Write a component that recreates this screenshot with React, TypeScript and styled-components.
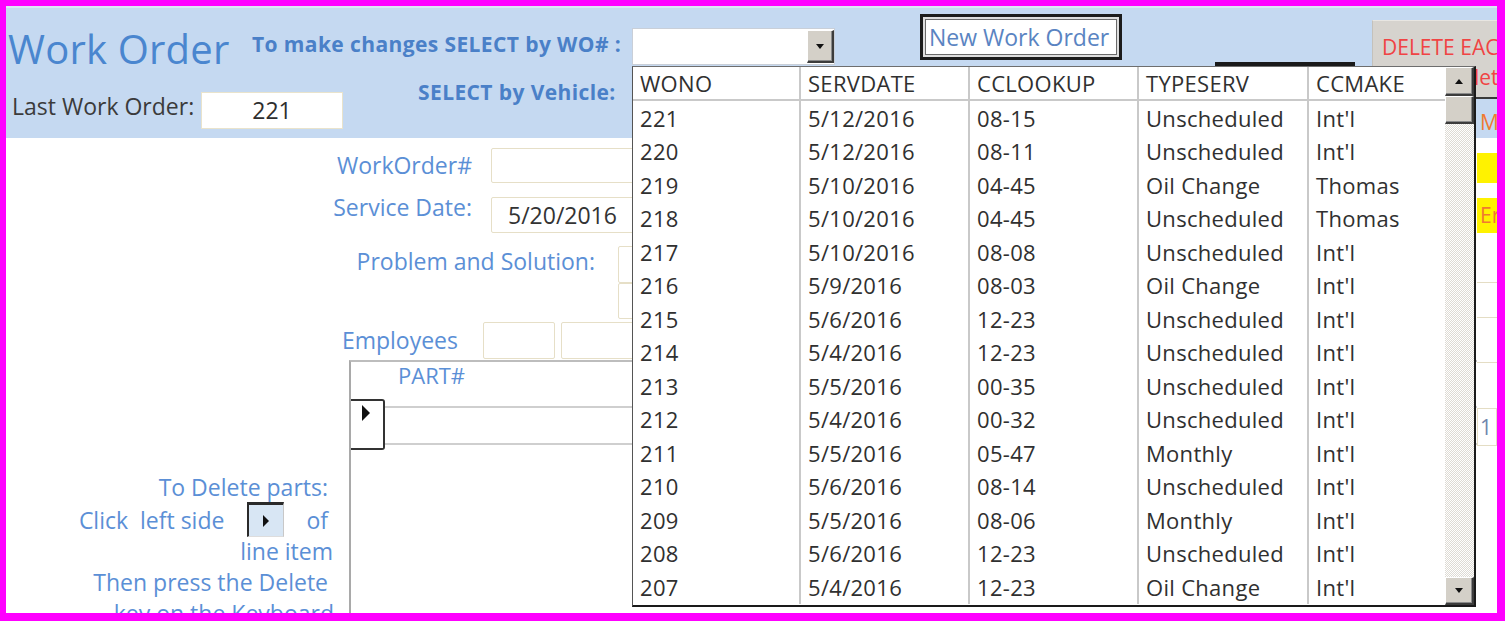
import React from "react";
import styled, { createGlobalStyle } from "styled-components";

const FONT = `"Open Sans", "Liberation Sans", sans-serif`;

const GlobalStyle = createGlobalStyle`
  html, body { margin: 0; padding: 0; background: #ffffff; }
  #root { width: 1505px; height: 621px; }
`;

const Frame = styled.div`
  position: relative;
  box-sizing: border-box;
  width: 1505px;
  height: 621px;
  border-style: solid;
  border-color: #ff00ff;
  border-width: 6px 8px 8px 6px;
  background: #ffffff;
  overflow: hidden;
  font-family: ${FONT};
  display: flex;
  flex-direction: column;
`;

/* ---------- form header ---------- */

const Header = styled.header`
  flex: none;
  height: 132px;
  background: linear-gradient(#dce7f5 0 2px, #c5d9f1 2px);
  display: flex;
  flex-direction: column;
`;

const HeaderRow = styled.div<{ $h: number }>`
  flex: none;
  height: ${(p) => p.$h}px;
  display: flex;
  align-items: flex-start;
`;

const Title = styled.h1`
  margin: 23px 0 0 2px;
  width: 244px;
  flex: none;
  font-size: 40px;
  line-height: 1;
  font-weight: 400;
  letter-spacing: 0.2px;
  color: #4a86cf;
  white-space: nowrap;
`;

const Prompt = styled.div<{ $w: number; $top: number; $left?: number }>`
  flex: none;
  width: ${(p) => p.$w}px;
  margin: ${(p) => p.$top}px 0 0 ${(p) => p.$left ?? 0}px;
  font-size: 21px;
  line-height: 1;
  font-weight: 700;
  letter-spacing: 0.4px;
  color: #4a80c8;
  white-space: nowrap;
`;

const ComboBox = styled.div`
  flex: none;
  margin: 22px 0 0 12px;
  width: 203px;
  height: 37px;
  box-sizing: border-box;
  background: #ffffff;
  border: 1px solid #c9cfd8;
  display: flex;
  justify-content: flex-end;
  padding: 1px 0 1px 0;
`;

const Raised = styled.div`
  box-sizing: border-box;
  background: #d4d0c8;
  border-style: solid;
  border-width: 1px 2px 2px 1px;
  border-color: #ffffff #3c3c3c #3c3c3c #ffffff;
  box-shadow: inset -1px -1px 0 #8a8a8a;
  display: flex;
  align-items: center;
  justify-content: center;
`;

const ComboButton = styled(Raised)`
  width: 27px;
  height: 33px;
`;

const Arrow = styled.span<{ $up?: boolean }>`
  width: 0;
  height: 0;
  border-left: 4px solid transparent;
  border-right: 4px solid transparent;
  ${(p) =>
    p.$up ? "border-bottom: 5px solid #111111;" : "border-top: 5px solid #111111;"}
`;

const NewOrderButton = styled.div`
  flex: none;
  margin: 8px 0 0 85px;
  width: 202px;
  height: 46px;
  box-sizing: border-box;
  border: 3px solid #1c1c1c;
  box-shadow: inset 0 0 0 2px #dedede, inset 0 0 0 3px #6a6a6a;
  background: #ffffff;
  padding-left: 6px;
  font-size: 23px;
  line-height: 40px;
  color: #5a84c2;
  white-space: nowrap;
`;

const ButtonBehind = styled.div`
  flex: none;
  margin: 56px 0 0 93px;
  width: 140px;
  height: 40px;
  box-sizing: border-box;
  border-top: 5px solid #1a1a1a;
  background: #d4d0c8;
`;

const DeleteButton = styled.div`
  flex: none;
  margin: 14px 0 0 17px;
  width: 150px;
  height: 79px;
  box-sizing: border-box;
  background: #d6d3ce;
  border-top: 1px solid #e8e6e2;
  border-left: 1px solid #c4c1bb;
  border-bottom: 2px solid #3a3a3a;
  padding: 11px 0 0 9px;
  color: #f04444;
  font-size: 21px;
  line-height: 30px;
  white-space: nowrap;
`;

const DeleteLine = styled.div<{ $indent?: number }>`
  padding-left: ${(p) => p.$indent ?? 0}px;
`;

const LastLabel = styled.div`
  flex: none;
  margin: 19px 0 0 6px;
  width: 189px;
  font-size: 23px;
  line-height: 1;
  color: #3b3b3b;
  white-space: nowrap;
`;

const ValueBox = styled.div`
  flex: none;
  margin-top: 16px;
  width: 142px;
  height: 37px;
  box-sizing: border-box;
  background: #ffffff;
  border: 1px solid #e9e3cc;
  text-align: center;
  font-size: 23px;
  line-height: 35px;
  color: #2e2e2e;
`;

const SideNote = styled.div<{ $left: number; $top: number }>`
  flex: none;
  margin: ${(p) => p.$top}px 0 0 ${(p) => p.$left}px;
  font-size: 21px;
  line-height: 1;
  color: #f07a30;
  white-space: nowrap;
`;

/* ---------- form detail ---------- */

const Body = styled.main`
  flex: 1;
  display: flex;
  min-height: 0;
`;

const MainColumn = styled.div`
  flex: 1;
  display: flex;
  flex-direction: column;
  min-width: 0;
`;

const FieldRow = styled.div<{ $top: number; $h: number; $center?: boolean }>`
  flex: none;
  display: flex;
  align-items: ${(p) => (p.$center ? "center" : "flex-start")};
  margin-top: ${(p) => p.$top}px;
  height: ${(p) => p.$h}px;
`;

const FieldLabel = styled.div<{ $w: number; $top?: number }>`
  flex: none;
  width: ${(p) => p.$w}px;
  margin-top: ${(p) => p.$top ?? 0}px;
  text-align: right;
  font-size: 23px;
  line-height: 1;
  color: #5b8fd6;
  white-space: nowrap;
`;

const TextBox = styled.div<{ $left: number; $w: number; $h: number }>`
  flex: none;
  margin-left: ${(p) => p.$left}px;
  width: ${(p) => p.$w}px;
  height: ${(p) => p.$h}px;
  box-sizing: border-box;
  border: 1px solid #e6dfc7;
  border-radius: 2px;
  background: #ffffff;
  padding-left: 16px;
  font-size: 23px;
  line-height: ${(p) => p.$h - 2}px;
  color: #333333;
  white-space: nowrap;
`;

const BoxStack = styled.div`
  flex: none;
  margin-left: 23px;
  display: flex;
  flex-direction: column;
`;

const BottomArea = styled.div`
  flex: 1;
  display: flex;
  margin-top: 1px;
  min-height: 0;
`;

const HelpColumn = styled.div`
  flex: none;
  width: 343px;
  box-sizing: border-box;
  padding: 112px 21px 0 0;
  display: flex;
  flex-direction: column;
  align-items: flex-end;
  color: #5b8fd6;
  font-size: 23px;
`;

const HelpLine = styled.div<{ $shift?: number }>`
  height: 31px;
  line-height: 31px;
  white-space: nowrap;
  margin-right: ${(p) => -(p.$shift ?? 0)}px;
`;

const HelpInline = styled.div`
  height: 33px;
  display: flex;
  align-items: center;
  white-space: nowrap;
`;

const SelectorChip = styled.span`
  display: inline-flex;
  align-items: center;
  justify-content: center;
  width: 37px;
  height: 35px;
  box-sizing: border-box;
  margin: 0 22px 0 23px;
  background: #d8e6f4;
  border-top: 3px solid #2a2a2a;
  border-left: 2px solid #2a2a2a;
  border-right: 1px solid #c8c8c8;
  border-bottom: 1px solid #dddddd;
`;

const PlayArrow = styled.span<{ $size?: number }>`
  width: 0;
  height: 0;
  border-top: ${(p) => p.$size ?? 7}px solid transparent;
  border-bottom: ${(p) => p.$size ?? 7}px solid transparent;
  border-left: ${(p) => (p.$size ?? 7) * 1.1}px solid #111111;
`;

const Subform = styled.div`
  flex: 1;
  display: flex;
  flex-direction: column;
  border-left: 2px solid #a9a9a9;
  border-top: 2px solid #bdbdbd;
  min-width: 0;
`;

const SubformHead = styled.div`
  flex: none;
  height: 37px;
  display: flex;
  align-items: flex-start;
  font-size: 22px;
  line-height: 26px;
  color: #5b8fd6;
`;

const HeadCell = styled.div<{ $left: number }>`
  flex: none;
  margin-left: ${(p) => p.$left}px;
  white-space: nowrap;
`;

const SubformRow = styled.div`
  flex: none;
  display: flex;
  align-items: flex-start;
`;

const RecordSelector = styled.div`
  flex: none;
  width: 34px;
  height: 51px;
  box-sizing: border-box;
  border-style: solid;
  border-color: #333333;
  border-width: 2px 2px 2px 0;
  border-radius: 0 3px 3px 0;
  padding: 4px 0 0 11px;
  display: flex;
  align-items: flex-start;
`;

const RowCell = styled.div`
  flex: 1;
  margin-top: 7px;
  height: 39px;
  box-sizing: border-box;
  border-top: 2px solid #cfcfcf;
  border-bottom: 2px solid #cfcfcf;
`;

const RightStrip = styled.div`
  flex: none;
  width: 20px;
  display: flex;
  flex-direction: column;
  font-size: 21px;
  color: #f07a30;
  white-space: nowrap;
`;

const YellowBox = styled.div<{ $top: number; $h: number }>`
  flex: none;
  margin-top: ${(p) => p.$top}px;
  height: ${(p) => p.$h}px;
  background: #fff200;
  padding-left: 3px;
  line-height: ${(p) => p.$h}px;
`;

const RuleBox = styled.div<{ $top: number; $h: number }>`
  flex: none;
  margin-top: ${(p) => p.$top}px;
  height: ${(p) => p.$h}px;
  box-sizing: border-box;
  border-top: 1px solid #e4ddc4;
`;

const CountBox = styled.div`
  flex: none;
  margin-top: 11px;
  height: 38px;
  box-sizing: border-box;
  border: 1px solid #e4ddc4;
  padding-left: 2px;
  font-size: 21px;
  line-height: 36px;
  color: #6f86ad;
`;

/* ---------- open combo box list ---------- */

const Dropdown = styled.div`
  position: absolute;
  left: 626px;
  top: 60px;
  width: 844px;
  height: 541px;
  box-sizing: border-box;
  background: #ffffff;
  border-style: solid;
  border-color: #6e6e6e #1a1a1a #1a1a1a #555555;
  border-width: 1px 2px 2px 1px;
  display: flex;
`;

const ListGrid = styled.div`
  flex: 1;
  display: grid;
  grid-template-columns: 168px 169px 169px 170px 1fr;
  grid-template-rows: 34px;
  grid-auto-rows: 33.5px;
  align-content: start;
`;

const ListCell = styled.div<{ $head?: boolean; $last?: boolean }>`
  box-sizing: border-box;
  padding-left: 7px;
  display: flex;
  align-items: center;
  font-size: 22px;
  letter-spacing: 0.3px;
  color: #303030;
  white-space: nowrap;
  overflow: hidden;
  border-right: ${(p) => (p.$last ? "none" : "2px solid #c9c9c9")};
  border-bottom: ${(p) => (p.$head ? "2px solid #c9c9c9" : "none")};
`;

const ScrollBar = styled.div`
  flex: none;
  width: 29px;
  display: flex;
  flex-direction: column;
`;

const ScrollButton = styled(Raised)<{ $h: number }>`
  flex: none;
  height: ${(p) => p.$h}px;
`;

const Thumb = styled(Raised)`
  flex: none;
  height: 28px;
`;

const Track = styled.div`
  flex: 1;
  background-color: #eeede9;
  background-image: repeating-conic-gradient(#ffffff 0 25%, #dedbd4 0 50%);
  background-size: 2px 2px;
`;

type Order = [string, string, string, string, string];

const columns = ["WONO", "SERVDATE", "CCLOOKUP", "TYPESERV", "CCMAKE"];

const orders: Order[] = [
  ["221", "5/12/2016", "08-15", "Unscheduled", "Int'l"],
  ["220", "5/12/2016", "08-11", "Unscheduled", "Int'l"],
  ["219", "5/10/2016", "04-45", "Oil Change", "Thomas"],
  ["218", "5/10/2016", "04-45", "Unscheduled", "Thomas"],
  ["217", "5/10/2016", "08-08", "Unscheduled", "Int'l"],
  ["216", "5/9/2016", "08-03", "Oil Change", "Int'l"],
  ["215", "5/6/2016", "12-23", "Unscheduled", "Int'l"],
  ["214", "5/4/2016", "12-23", "Unscheduled", "Int'l"],
  ["213", "5/5/2016", "00-35", "Unscheduled", "Int'l"],
  ["212", "5/4/2016", "00-32", "Unscheduled", "Int'l"],
  ["211", "5/5/2016", "05-47", "Monthly", "Int'l"],
  ["210", "5/6/2016", "08-14", "Unscheduled", "Int'l"],
  ["209", "5/5/2016", "08-06", "Monthly", "Int'l"],
  ["208", "5/6/2016", "12-23", "Unscheduled", "Int'l"],
  ["207", "5/4/2016", "12-23", "Oil Change", "Int'l"],
];

export default function App() {
  return (
    <>
      <GlobalStyle />
      <Frame>
        <Header>
          <HeaderRow $h={70}>
            <Title>Work Order</Title>
            <Prompt $w={368} $top={28}>
              To make changes SELECT by WO# :
            </Prompt>
            <ComboBox>
              <ComboButton>
                <Arrow />
              </ComboButton>
            </ComboBox>
            <NewOrderButton>New Work Order</NewOrderButton>
            <ButtonBehind />
            <DeleteButton>
              <DeleteLine>DELETE EACH</DeleteLine>
              <DeleteLine $indent={65}>Delete</DeleteLine>
            </DeleteButton>
          </HeaderRow>
          <HeaderRow $h={62}>
            <LastLabel>Last Work Order:</LastLabel>
            <ValueBox>221</ValueBox>
            <Prompt $w={199} $top={6} $left={75}>
              SELECT by Vehicle:
            </Prompt>
            <SideNote $left={863} $top={36}>
              Mileage
            </SideNote>
          </HeaderRow>
        </Header>

        <Body>
          <MainColumn>
            <FieldRow $top={10} $h={35} $center>
              <FieldLabel $w={466}>WorkOrder#</FieldLabel>
              <TextBox $left={19} $w={220} $h={35} />
            </FieldRow>
            <FieldRow $top={14} $h={36}>
              <FieldLabel $w={466} $top={-1}>
                Service Date:
              </FieldLabel>
              <TextBox $left={19} $w={220} $h={36}>
                5/20/2016
              </TextBox>
            </FieldRow>
            <FieldRow $top={13} $h={72}>
              <FieldLabel $w={589} $top={4}>
                Problem and Solution:
              </FieldLabel>
              <BoxStack>
                <TextBox $left={0} $w={220} $h={37} />
                <TextBox $left={0} $w={220} $h={36} />
              </BoxStack>
            </FieldRow>
            <FieldRow $top={4} $h={37}>
              <FieldLabel $w={452} $top={7}>
                Employees
              </FieldLabel>
              <TextBox $left={25} $w={72} $h={37} />
              <TextBox $left={6} $w={220} $h={37} />
            </FieldRow>
            <BottomArea>
              <HelpColumn>
                <HelpLine>To Delete parts:</HelpLine>
                <HelpInline>
                  Click&nbsp; left side
                  <SelectorChip>
                    <PlayArrow $size={6} />
                  </SelectorChip>
                  of
                </HelpInline>
                <HelpLine $shift={5}>line item</HelpLine>
                <HelpLine>Then press the Delete</HelpLine>
                <HelpLine $shift={6}>key on the Keyboard</HelpLine>
              </HelpColumn>
              <Subform>
                <SubformHead>
                  <HeadCell $left={47}>PART#</HeadCell>
                </SubformHead>
                <SubformRow>
                  <RecordSelector>
                    <PlayArrow $size={8} />
                  </RecordSelector>
                  <RowCell />
                </SubformRow>
              </Subform>
            </BottomArea>
          </MainColumn>

          <RightStrip>
            <YellowBox $top={15} $h={30} />
            <YellowBox $top={15} $h={35}>
              Error
            </YellowBox>
            <RuleBox $top={49} $h={35} />
            <RuleBox $top={0} $h={45} />
            <RuleBox $top={0} $h={35} />
            <CountBox>1</CountBox>
          </RightStrip>
        </Body>

        <Dropdown>
          <ListGrid>
            {columns.map((c, i) => (
              <ListCell key={c} $head $last={i === columns.length - 1}>
                {c}
              </ListCell>
            ))}
            {orders.map((row) =>
              row.map((v, i) => (
                <ListCell key={row[0] + "-" + i} $last={i === row.length - 1}>
                  {v}
                </ListCell>
              ))
            )}
          </ListGrid>
          <ScrollBar>
            <ScrollButton $h={29}>
              <Arrow $up />
            </ScrollButton>
            <Thumb />
            <Track />
            <ScrollButton $h={28}>
              <Arrow />
            </ScrollButton>
          </ScrollBar>
        </Dropdown>
      </Frame>
    </>
  );
}
